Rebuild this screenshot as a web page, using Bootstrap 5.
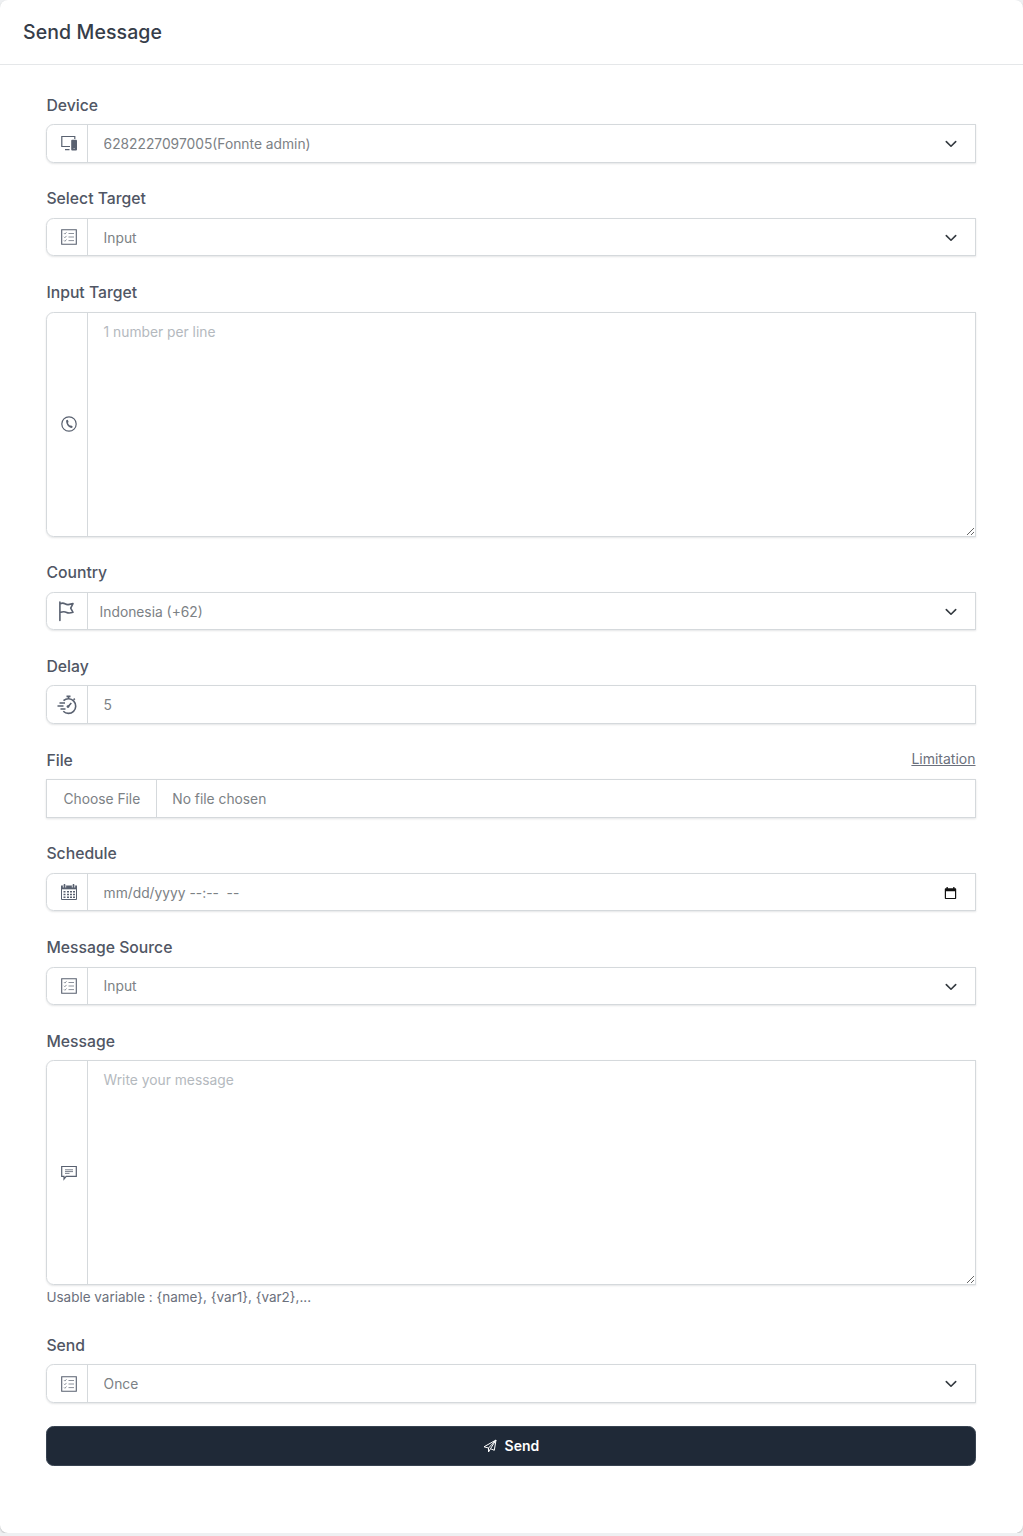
<!DOCTYPE html>
<html lang="en">
<head>
<meta charset="utf-8">
<meta name="viewport" content="width=device-width, initial-scale=1">
<title>Send Message</title>
<link href="https://cdn.jsdelivr.net/npm/bootstrap@5.3.0/dist/css/bootstrap.min.css" rel="stylesheet">
<style>
body{font-family:Inter,"Liberation Sans",sans-serif;background:#eef0f2;color:#4a5160;font-size:14px}
.send-card{height:1533px;border:0;border-radius:8px;box-shadow:0 1px 2px rgba(0,0,0,.22);background:#fff}
.send-card .card-header{height:65px;padding:0 23px;background:transparent;border-bottom:1px solid #e5e7e9}
.send-card .card-header h1{font-size:19.5px;font-weight:500;line-height:64px;margin:0;color:#363d49;letter-spacing:.1px}
.send-card .card-body{padding:27.7px 47.5px 0 46.4px}
.field{margin-bottom:23.7px}
.field:last-of-type{margin-bottom:23px}
.field .form-label{display:block;font-size:15.75px;font-weight:500;line-height:26px;margin-bottom:5.5px;color:#505664}
.field .input-group{border-radius:7.5px 0 0 7.5px;box-shadow:0 1px 2px rgba(30,40,50,.12)}
.field .input-group-text{width:42px;padding:0 0 0 13.6px;background:#fff;border-color:#d5d9dc;border-radius:7.5px 0 0 7.5px;color:#596170}
.field .input-group-text.wide-icon{padding-left:9.6px}
.field .form-control,.field .form-select{height:38.5px;font-size:13.8px;line-height:22px;padding:7.8px 16px 6.7px 15.2px;border-color:#d5d9dc;border-radius:0;color:#7c8185;background-color:#fff}
.field .form-select{background-image:none}
.field .select-wrap{position:relative;flex:1 1 auto;margin-left:-1px}
.field .select-wrap svg,.field .select-wrap .cal-icon{position:absolute;right:18.5px;top:14px;pointer-events:none}
.field textarea.form-control{height:225px;padding-top:8px;padding-bottom:6px}
.field .form-control::placeholder{color:#b4b9be}
.field .form-control.date-text::placeholder{color:#7c8185;opacity:1}
.field .form-select.country{padding-left:11.2px}
.field input[type=file]{box-shadow:0 1px 2px rgba(30,40,50,.12)}
.field input[type=file]::file-selector-button{background:#fff!important;color:#7c8185;border-color:#d5d9dc;padding:7.8px 16px;margin:-7.8px 15px -7.8px -15.2px}
.limit-link{font-size:14px;line-height:21.6px;color:#6b707c}
.hint{font-size:13.5px;line-height:23.5px;color:#6b707c;padding-top:1.3px;height:24px}
.btn-send{height:40px;background:#1f2937;border:1px solid #374250;border-radius:7.5px;color:#fff;font-size:14px;font-weight:600;padding:0}
.btn-send svg{margin-right:8px}
</style>
<script src="https://cdn.jsdelivr.net/npm/bootstrap@5.3.0/dist/js/bootstrap.bundle.min.js"></script>
</head>
<body>
<svg class="d-none" xmlns="http://www.w3.org/2000/svg">
  <symbol id="i-list" viewBox="0 0 16 16"><path fill="none" stroke="currentColor" stroke-width="1.1" d="M.7.7h14.6v14.6H.7z"/><path fill="none" stroke="currentColor" stroke-width=".7" d="M3 4.2l.9.9 1.6-1.8M3 7.8l.9.9 1.6-1.8M3 11.4l.9.9 1.6-1.8M7.5 4.5H13M7.5 8H13M7.5 11.6H13"/></symbol>
  <symbol id="i-chev" viewBox="0 0 12 12"><path fill="none" stroke="#343a40" stroke-width="1.6" stroke-linecap="round" stroke-linejoin="round" d="M1.3 3.6L6 8.2l4.7-4.6"/></symbol>
</svg>
<main class="card send-card">
  <div class="card-header"><h1>Send Message</h1></div>
  <form class="card-body">
    <div class="field">
      <label class="form-label" for="device">Device</label>
      <div class="input-group flex-nowrap">
        <span class="input-group-text"><svg width="17" height="16" viewBox="0 0 17 16"><path fill="none" stroke="currentColor" stroke-width="1.2" d="M9 11.500H.8V1.500h13v2.500M4 14.700h4.500"/><rect x="10.2" y="4.700" width="5.800" height="10.800" rx="1" fill="currentColor"/><path stroke="#aab0b8" stroke-width=".8" d="M12.3 13.5h1.7"/></svg></span>
        <div class="select-wrap"><select class="form-select" id="device"><option>6282227097005(Fonnte admin)</option></select><svg width="12" height="12"><use href="#i-chev"/></svg></div>
      </div>
    </div>
    <div class="field">
      <label class="form-label" for="target">Select Target</label>
      <div class="input-group flex-nowrap">
        <span class="input-group-text"><svg width="16" height="16"><use href="#i-list"/></svg></span>
        <div class="select-wrap"><select class="form-select" id="target"><option>Input</option></select><svg width="12" height="12"><use href="#i-chev"/></svg></div>
      </div>
    </div>
    <div class="field">
      <label class="form-label" for="numbers">Input Target</label>
      <div class="input-group flex-nowrap">
        <span class="input-group-text"><svg width="16" height="16" viewBox="0 0 16 16"><circle cx="8" cy="8" r="7.2" fill="none" stroke="currentColor" stroke-width="1.2"/><path fill="none" stroke="currentColor" stroke-width="1.5" stroke-linecap="round" d="M6 5C5.7 7.6 7.5 10.5 10.2 11"/><path stroke="currentColor" stroke-width="1.8" stroke-linecap="round" d="M6.2 4.8l.4 1.1M9.7 10.4l1 .5"/></svg></span>
        <textarea class="form-control" id="numbers" placeholder="1 number per line"></textarea>
      </div>
    </div>
    <div class="field">
      <label class="form-label" for="country">Country</label>
      <div class="input-group flex-nowrap">
        <span class="input-group-text wide-icon"><svg width="20" height="22" viewBox="0 0 20 22"><path fill="none" stroke="currentColor" stroke-width="1.6" stroke-linejoin="round" stroke-linecap="round" d="M2.900 2v18.500M2.900 3.800c2-.9 3.700-.9 5-.1 1.500.9 1.900 1.100 3.300.9l4.800-1-2.300 4.500 2.300 4.200c-2.600.9-4.500 1.200-6.300.2-2.100-1.200-4-1-6.800 0"/></svg></span>
        <div class="select-wrap"><select class="form-select country" id="country"><option>Indonesia (+62)</option></select><svg width="12" height="12"><use href="#i-chev"/></svg></div>
      </div>
    </div>
    <div class="field">
      <label class="form-label" for="delay">Delay</label>
      <div class="input-group flex-nowrap">
        <span class="input-group-text wide-icon"><svg width="20" height="20" viewBox="0 0 20 20"><path fill="none" stroke="currentColor" stroke-width="1.6" d="M6.5 5.700A7.3 7.3 0 1 1 6.3 16.300M2.500 8H8M.5 11h6M3.5 14h5M11.500 1.500V4M16.600 4.800l1.200-1.200"/><path stroke="currentColor" stroke-width="1.600" d="M9.5 1.400h4M11 11.800L14.300 8"/><circle cx="11" cy="11.6" r="1.400" fill="currentColor"/></svg></span>
        <input class="form-control" id="delay" type="text" value="5">
      </div>
    </div>
    <div class="field">
      <div class="d-flex justify-content-between align-items-start"><label class="form-label" for="file">File</label><a class="limit-link" href="#">Limitation</a></div>
      <input class="form-control" id="file" type="file">
    </div>
    <div class="field">
      <label class="form-label" for="schedule">Schedule</label>
      <div class="input-group flex-nowrap">
        <span class="input-group-text"><svg width="16" height="16" viewBox="0 0 16 16"><path fill="currentColor" d="M0 1.5h16v3.800H0z"/><path fill="none" stroke="currentColor" stroke-width="1" d="M.5 2v13.500h15V2"/><path stroke="currentColor" stroke-width="1.5" d="M3.500 0v3M12.500 0v3"/><path stroke="#fff" stroke-width=".8" d="M2.300 1.500v2M4.700 1.500v2M11.300 1.500v2M13.700 1.500v2"/><path fill="currentColor" d="M6 7h2v1.600H6zM9 7h2v1.600H9zM12 7h2v1.600h-2zM2.500 9.700h2v1.600h-2zM6 9.700h2v1.600H6zM9 9.700h2v1.600H9zM12 9.700h2v1.600h-2zM2.500 12.400h2V14h-2zM6 12.400h2V14H6zM9 12.400h2V14H9zM2.500 7h2v1.600h-2zM12 12.400h2V14h-2z"/></svg></span>
        <div class="select-wrap"><input class="form-control date-text" id="schedule" type="text" placeholder="mm/dd/yyyy --:--&nbsp; --"><svg class="cal-icon" width="13" height="13" viewBox="0 0 13 13"><path fill="#111" fill-rule="evenodd" d="M2.500 0h1.300v1.200h5.400V0h1.300v1.200h.7c.6 0 1 .4 1 1v8.900c0 .6-.4 1-1 1H1.800c-.6 0-1-.4-1-1V2.200c0-.6.4-1 1-1h.7zM2 4.200v6.700h9V4.200z"/></svg></div>
      </div>
    </div>
    <div class="field">
      <label class="form-label" for="source">Message Source</label>
      <div class="input-group flex-nowrap">
        <span class="input-group-text"><svg width="16" height="16"><use href="#i-list"/></svg></span>
        <div class="select-wrap"><select class="form-select" id="source"><option>Input</option></select><svg width="12" height="12"><use href="#i-chev"/></svg></div>
      </div>
    </div>
    <div class="field">
      <label class="form-label" for="message">Message</label>
      <div class="input-group flex-nowrap">
        <span class="input-group-text"><svg width="16" height="16" viewBox="0 0 16 16"><path fill="none" stroke="currentColor" stroke-width="1.2" d="M.7 1.500h14.600v9.800H5.200L3 14v-2.700H.7z"/><path stroke="currentColor" stroke-width=".8" d="M4 4.800h8M4 6.600h8M4 8.400h4.500"/></svg></span>
        <textarea class="form-control" id="message" placeholder="Write your message"></textarea>
      </div>
      <div class="hint">Usable variable : {name}, {var1}, {var2},...</div>
    </div>
    <div class="field">
      <label class="form-label" for="repeat">Send</label>
      <div class="input-group flex-nowrap">
        <span class="input-group-text"><svg width="16" height="16"><use href="#i-list"/></svg></span>
        <div class="select-wrap"><select class="form-select" id="repeat"><option>Once</option></select><svg width="12" height="12"><use href="#i-chev"/></svg></div>
      </div>
    </div>
    <button class="btn btn-send w-100 d-flex align-items-center justify-content-center" type="button"><svg width="14" height="14" viewBox="0 0 14 14"><path fill="none" stroke="currentColor" stroke-width="1" stroke-linejoin="round" d="M1 7.800L13 1l-1.700 10.300-3.800-1.600L5.500 13V9zM5.500 9L13 1 7.500 9.700"/></svg>Send</button>
  </form>
</main>
</body>
</html>
